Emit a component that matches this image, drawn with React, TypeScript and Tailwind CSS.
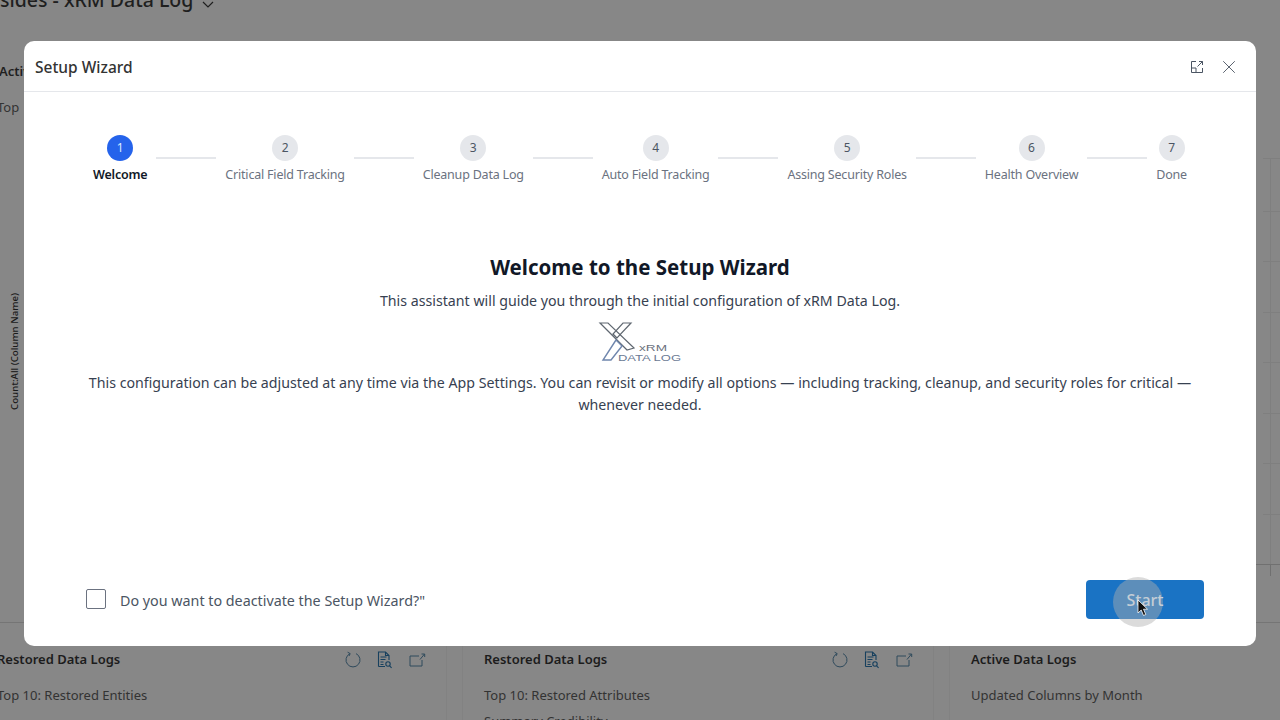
import { Fragment } from 'react'
import { X } from 'lucide-react'

const steps = [
  'Welcome',
  'Critical Field Tracking',
  'Cleanup Data Log',
  'Auto Field Tracking',
  'Assing Security Roles',
  'Health Overview',
  'Done',
]

const cards = [
  { title: 'Restored Data Logs', sub: 'Top 10: Restored Entities', row: '', icons: true },
  { title: 'Restored Data Logs', sub: 'Top 10: Restored Attributes', row: 'Summary Credibility', icons: true },
  { title: 'Active Data Logs', sub: 'Updated Columns by Month', row: '', icons: false },
]

function RefreshIcon() {
  return (
    <svg width="18" height="18" viewBox="0 0 18 18" fill="none" stroke="#2f4a5c" strokeWidth="1">
      <path d="M6 2.6a7 7 0 1 0 6 0" />
      <path d="M3.6 1.2 6.2 2.6 5 5" />
    </svg>
  )
}

function DocSearchIcon() {
  return (
    <svg width="16" height="18" viewBox="0 0 16 18" fill="none" stroke="#17405e" strokeWidth="1.1">
      <path d="M1.5 15.5V1h7l3.5 3.5V9M1.5 15.5H8" />
      <path d="M8.5 1v3.5H12M3.5 6h6M3.5 8.5h5M3.5 11h3M3.5 13.5h3" />
      <circle cx="11" cy="13" r="2.2" />
      <path d="m12.6 14.8 2 2" />
    </svg>
  )
}

function OpenIcon() {
  return (
    <svg width="17" height="14" viewBox="0 0 17 14" fill="none" stroke="#2f4a5c" strokeWidth="1">
      <path d="M10 3H1v10h12V7" />
      <path d="M11 6.5 15.5 1M12.5 1h3.2v3" />
    </svg>
  )
}

function ExpandIcon() {
  return (
    <svg width="14" height="14" viewBox="0 0 14 14" fill="none" stroke="#4b5563" strokeWidth="1">
      <path d="M6 1.500H1.500v11h11V8" />
      <path d="M1.500 8H6v4.500" />
      <path d="M7.500 6.500 12.500 1.500M9 1.500h3.500V5" />
    </svg>
  )
}

function XrmLogo() {
  return (
    <svg width="84" height="41" viewBox="0 0 84 41" className="block">
      <path d="M2 1h8l26 25-7 2zM33 1h-8L15 12l4 4z" fill="none" stroke="#5f6770" strokeWidth="1.200" />
      <path d="M18 18 5 38h8l11-14z" fill="none" stroke="#6f86ad" strokeWidth="1.400" />
      <text x="41" y="28.500" fontSize="9.500" textLength="28" lengthAdjust="spacingAndGlyphs" fill="#6b7280" fontFamily="'Liberation Sans', sans-serif">
        xRM
      </text>
      <text x="20" y="39" fontSize="9.500" textLength="63" lengthAdjust="spacingAndGlyphs" fill="#6b7a94" fontFamily="'Liberation Sans', sans-serif">
        DATA LOG
      </text>
    </svg>
  )
}

function ChartEdge() {
  const lines = [0, 53, 103, 154, 204, 255, 305, 356]
  return (
    <svg width="24" height="420" viewBox="0 0 24 420" className="mt-[144px] shrink-0" fill="none">
      {lines.map((y) => (
        <path key={y} d={`M7 ${y + 0.5}H24`} stroke="#7f7f7f" />
      ))}
      <path d="M14.500 0V406" stroke="#7f7f7f" />
      <path d="M0 406.500H24" stroke="#707070" />
      <path d="M14.500 406V418" stroke="#707070" />
    </svg>
  )
}

export default function App() {
  return (
    <div className="relative h-[720px] w-[1280px] overflow-hidden bg-[#878787] font-['Noto_Sans','Open_Sans',sans-serif]">
      {/* page behind the dialog */}
      <div className="flex h-full flex-col">
        <div className="flex h-[14px] shrink-0 items-end gap-[9px]">
          <span className="text-[19.500px] leading-[28px] font-medium whitespace-nowrap text-[#1f1f1f]">sides - xRM Data Log</span>
          <svg width="12" height="8" viewBox="0 0 12 8" fill="none" stroke="#1f1f1f" strokeWidth="1.200" className="mb-[5px]">
            <path d="m1 1 5 5 5-5" />
          </svg>
        </div>
        <div className="flex min-h-0 flex-1 justify-between">
          <div>
            <div className="mt-[47px] -ml-[1px] text-[13px] leading-[20px] font-semibold text-[#1f1f1f]">Active</div>
            <div className="mt-[16px] -ml-[3px] text-[13px] leading-[20px] text-[#333]">Top</div>
            <div className="mt-[175px] ml-[9px] h-[118px] rotate-180 text-[9.700px] leading-[12px] font-medium whitespace-nowrap text-[#1a1a1a] [writing-mode:vertical-rl]">
              Count:All (Column Name)
            </div>
          </div>
          <ChartEdge />
        </div>
        <div className="h-[98px] shrink-0 border-t border-[#757575]">
          <div className="-ml-[25px] flex h-full gap-[15px]">
            {cards.map((card, i) => (
              <div key={i} className="h-full w-[472px] shrink-0 border-x border-[#828282] pt-[27px] pr-[20px] pl-[21px]">
                <div className="flex h-[20px] items-center">
                  <span className="text-[13px] font-semibold whitespace-nowrap text-[#1c1c1c]">{card.title}</span>
                  {card.icons && (
                    <div className="ml-auto flex items-center">
                      <RefreshIcon />
                      <span className="ml-[15px]">
                        <DocSearchIcon />
                      </span>
                      <span className="ml-[16px]">
                        <OpenIcon />
                      </span>
                    </div>
                  )}
                </div>
                <div className="mt-[15px] text-[13px] leading-[20px] whitespace-nowrap text-[#333]">{card.sub}</div>
                {card.row && <div className="mt-[6px] text-[13px] leading-[20px] whitespace-nowrap text-[#333]">{card.row}</div>}
              </div>
            ))}
          </div>
        </div>
      </div>

      {/* dialog */}
      <div className="absolute top-[41px] left-[24px] flex h-[605px] w-[1232px] flex-col rounded-[10px] bg-white">
        <div className="flex h-[51px] shrink-0 items-center justify-between border-b border-[#e5e7eb] pt-[2px] pr-[16px] pl-[11px]">
          <span className="translate-y-px text-[15.500px] font-medium text-[#333]">Setup Wizard</span>
          <div className="flex items-center gap-[14px]">
            <ExpandIcon />
            <X size={22} strokeWidth={1} color="#4b5563" />
          </div>
        </div>

        <div className="flex justify-between px-[69px] pt-[43px]">
          {steps.map((step, i) => (
            <Fragment key={step}>
              <div className="flex flex-col items-center">
                <div className={`flex h-[26px] w-[26px] items-center justify-center rounded-full text-[12px] ${i === 0 ? 'bg-[#2563eb] text-[#dbeafe]' : 'bg-[#e5e7eb] text-[#4b5563]'}`}>
                  {i + 1}
                </div>
                <span className={`mt-[5px] text-[12.500px] leading-[18px] tracking-[-0.2px] whitespace-nowrap ${i === 0 ? 'font-semibold text-[#111827]' : 'text-[#6b7280]'}`}>
                  {step}
                </span>
              </div>
              {i < steps.length - 1 && <div className="mt-[22px] h-[2px] w-[60px] bg-[#e5e7eb]" />}
            </Fragment>
          ))}
        </div>

        <div className="flex flex-1 flex-col items-center px-[60px] pt-[69px] text-center">
          <h1 className="text-[20.500px] leading-[28px] font-bold text-[#111827]">Welcome to the Setup Wizard</h1>
          <p className="mt-[9px] text-[14.200px] leading-[22px] text-[#374151]">
            This assistant will guide you through the initial configuration of xRM Data Log.
          </p>
          <div className="mt-[10px]">
            <XrmLogo />
          </div>
          <p className="mt-[9px] text-[14.200px] leading-[22px] text-[#374151]">
            This configuration can be adjusted at any time via the App Settings. You can revisit or modify all options — including tracking, cleanup, and security roles for critical — whenever needed.
          </p>
        </div>

        <div className="flex items-center justify-between pr-[52px] pb-[27px] pl-[62px]">
          <label className="flex items-center gap-[14px] text-[14.300px] text-[#4b5563]">
            <span className="h-[20px] w-[20px] -translate-y-px rounded-[2px] border border-[#6b7280] bg-white" />
            <span className="translate-y-px">Do you want to deactivate the Setup Wizard?"</span>
          </label>
          <div className="relative">
            <button className="h-[39px] w-[118px] rounded-[4px] bg-[#1a73c4] text-[16px] font-medium text-[#d7e6f5]">Start</button>
            {/* click highlight and mouse pointer */}
            <div className="absolute top-[-3px] left-[27px] h-[50px] w-[50px] rounded-full bg-[#afafaf]/45" />
            <svg width="12" height="18" viewBox="0 0 12 18" className="absolute top-[19px] left-[51px]">
              <path d="M1 1v13l3.200-3 2.300 5.500 2.300-1-2.300-5.300H10.500z" fill="#111" stroke="#fff" strokeWidth="0.800" />
            </svg>
          </div>
        </div>
      </div>
    </div>
  )
}
